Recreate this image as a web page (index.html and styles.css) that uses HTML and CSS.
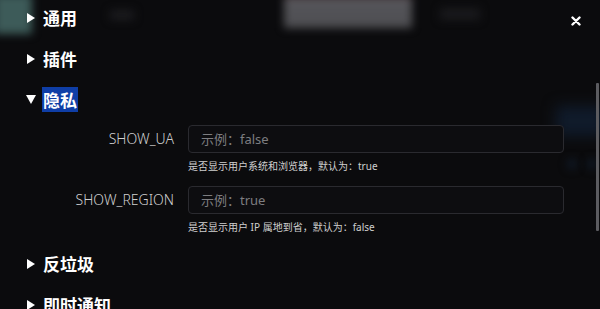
FILE: index.html
```html
<!DOCTYPE html>
<html lang="zh-CN">
<head>
    <meta charset="UTF-8">
    <meta name="viewport" content="width=device-width, initial-scale=1.0">
    <title>设置</title>
    <link rel="stylesheet" href="styles.css">
</head>
<body>
    <div class="backdrop">
        <div class="blob blob-teal"></div>
        <div class="blob blob-bar"></div>
        <div class="blob blob-grey1"></div>
        <div class="blob blob-grey2"></div>
        <div class="blob blob-blue1"></div>
        <div class="blob blob-blue2"></div>
        <div class="blob blob-blue3"></div>
    </div>

    <div class="dialog">
        <button class="close-btn" aria-label="关闭">
            <svg width="10" height="10" viewBox="0 0 10 10">
                <path d="M1.5 1.5 L8.5 8.5 M8.5 1.5 L1.5 8.5" stroke="#fff" stroke-width="2.4" stroke-linecap="round"/>
            </svg>
        </button>

        <div class="section">
            <div class="section-title"><span class="arrow right"></span><span>通用</span></div>
        </div>
        <div class="section">
            <div class="section-title"><span class="arrow right"></span><span>插件</span></div>
        </div>
        <div class="section open">
            <div class="section-title"><span class="arrow down"></span><span class="selected">隐私</span></div>
            <div class="fields">
                <div class="field">
                    <label class="field-label">SHOW_UA</label>
                    <div class="field-body">
                        <input class="field-input" type="text" placeholder="示例：false">
                        <div class="field-help">是否显示用户系统和浏览器，默认为：true</div>
                    </div>
                </div>
                <div class="field">
                    <label class="field-label">SHOW_REGION</label>
                    <div class="field-body">
                        <input class="field-input" type="text" placeholder="示例：true">
                        <div class="field-help">是否显示用户 IP 属地到省，默认为：false</div>
                    </div>
                </div>
            </div>
        </div>
        <div class="section">
            <div class="section-title"><span class="arrow right"></span><span>反垃圾</span></div>
        </div>
        <div class="section">
            <div class="section-title"><span class="arrow right"></span><span>即时通知</span></div>
        </div>
    </div>

    <div class="scrollbar"></div>
</body>
</html>
```

FILE: styles.css
```css
* {
    box-sizing: border-box;
    margin: 0;
    padding: 0;
}
html, body {
    height: 100%;
    overflow: hidden;
}
body {
    font-family: "Noto Sans", "Noto Sans CJK SC", sans-serif;
    background-color: #0b0b0d;
    color: #d8d8d8;
    position: relative;
}

/* blurred page behind the dialog */
.backdrop {
    position: absolute;
    inset: 0;
    z-index: 0;
    pointer-events: none;
}
.blob {
    position: absolute;
    filter: blur(4px);
}
.blob-teal {
    left: -6px; top: -6px;
    width: 38px; height: 40px;
    background: #3d5b59;
}
.blob-bar {
    left: 284px; top: -4px;
    width: 128px; height: 32px;
    background: linear-gradient(#6b5256 0, #55555a 14%, #4e4e52 100%);
}
.blob-grey1 {
    left: 110px; top: 10px;
    width: 24px; height: 10px;
    background: #1b1b1e;
}
.blob-grey2 {
    left: 440px; top: 8px;
    width: 40px; height: 12px;
    background: #19191c;
}
.blob-blue1 {
    left: 556px; top: 106px;
    width: 50px; height: 30px;
    background: #101b2b;
    filter: blur(7px);
}
.blob-blue2 {
    left: 567px; top: 159px;
    width: 10px; height: 10px;
    border-radius: 50%;
    background: #101a28;
}
.blob-blue3 {
    left: 587px; top: 159px;
    width: 10px; height: 10px;
    border-radius: 50%;
    background: #101a28;
}

.dialog {
    position: relative;
    z-index: 1;
    padding: 5px 0 0 27px;
}
.close-btn {
    position: absolute;
    top: 16px;
    left: 571px;
    width: 10px;
    height: 10px;
    border: none;
    background: none;
    display: flex;
    cursor: pointer;
}

.section {
    margin-bottom: 16px;
}
.section-title {
    display: flex;
    align-items: center;
    gap: 8px;
    height: 25px;
    font-family: "Noto Sans CJK SC", sans-serif;
    font-size: 17px;
    font-weight: bold;
    color: #fff;
    line-height: 25px;
}
.selected {
    background-color: #0f3ea6;
    padding: 0 1px;
    margin-left: -1px;
}
.arrow {
    width: 0;
    height: 0;
    flex: none;
}
.arrow.right {
    border-top: 5px solid transparent;
    border-bottom: 5px solid transparent;
    border-left: 8px solid #fff;
}
.arrow.down {
    border-left: 5px solid transparent;
    border-right: 5px solid transparent;
    border-top: 9px solid #fff;
    margin-left: -1px;
    margin-right: -1px;
}

.fields {
    padding-top: 13px;
    display: flex;
    flex-direction: column;
    gap: 12px;
}
.field {
    display: flex;
    gap: 14px;
}
.field-label {
    flex: none;
    width: 147px;
    height: 27px;
    line-height: 27px;
    text-align: right;
    font-size: 14px;
    font-weight: 300;
    color: #cfcfcf;
}
.field-body {
    flex: none;
    width: 376px;
}
.field-input {
    display: block;
    width: 100%;
    height: 28px;
    background: #0d0d10;
    border: 1px solid #2a2a2f;
    border-radius: 4px;
    padding: 0 12px;
    font-family: inherit;
    font-size: 13px;
    color: #ddd;
    outline: none;
}
.field-input::placeholder {
    color: #7d7d80;
}
.field-help {
    margin-top: 5px;
    font-size: 10px;
    line-height: 16px;
    color: #cfcfcf;
}

.scrollbar {
    position: absolute;
    z-index: 2;
    left: 596px;
    top: 83px;
    width: 3px;
    height: 148px;
    background: #5c5c60;
    border-radius: 1px;
}
```
